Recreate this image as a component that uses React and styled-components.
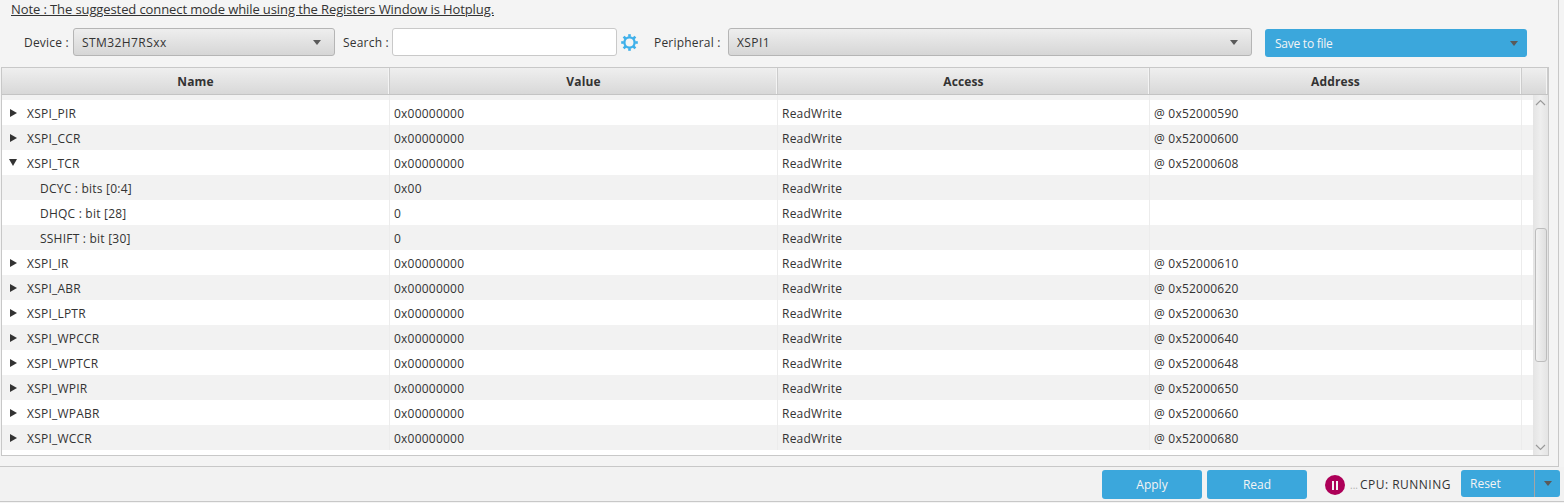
import styled, {createGlobalStyle} from 'styled-components'

const GlobalStyle = createGlobalStyle`
  html, body {
    margin: 0;
    padding: 0;
    background: #f4f4f4;
    overflow: hidden;
  }
  body {
    font-family: "Open Sans", "Liberation Sans", sans-serif;
    font-size: 12px;
    color: #333;
  }
`
const Page = styled.div`
  width: 1564px;
  height: 503px;
  box-sizing: border-box;
  display: flex;
  flex-direction: column;
`
const Main = styled.div`
  width: 1559px;
  height: 467px;
  box-sizing: border-box;
  border-right: 1px solid #c8c8c8;
  border-bottom: 1px solid #c8c8c8;
  display: flex;
  flex-direction: column;
  flex: none;
`
const Note = styled.div`
  height: 28px;
  flex: none;
  padding: 1px 0 0 11px;
  box-sizing: border-box;
  font-size: 13px;
  line-height: 16px;
  text-decoration: underline;
  letter-spacing: -0.1px;
`
const Toolbar = styled.div`
  height: 39px;
  flex: none;
  display: flex;
  align-items: flex-start;
`
const Label = styled.span`
  margin-left: ${p => p.$left}px;
  width: ${p => p.$width}px;
  flex: none;
  line-height: 30px;
  white-space: nowrap;
  letter-spacing: 0.2px;
`
const Select = styled.div`
  width: ${p => p.$width}px;
  height: 28px;
  flex: none;
  box-sizing: border-box;
  display: flex;
  align-items: center;
  justify-content: space-between;
  padding: 1px 13px 0 8px;
  border: 1px solid #b5b5b5;
  border-radius: 3px;
  background: linear-gradient(#eeeeee, #d6d6d6);
  letter-spacing: 0.42px;
`
const Arrow = styled.i`
  width: 0;
  height: 0;
  border-left: 4.5px solid transparent;
  border-right: 4.5px solid transparent;
  border-top: 5px solid #5a5a5a;
`
const SearchInput = styled.input`
  width: 225px;
  height: 28px;
  flex: none;
  box-sizing: border-box;
  border: 1px solid #c9c9c9;
  border-radius: 3px;
  background: #fff;
  outline: none;
`
const GearBox = styled.span`
  width: 24px;
  height: 28px;
  flex: none;
  display: flex;
  align-items: center;
  justify-content: center;
`
const SaveButton = styled.div`
  width: 262px;
  height: 28px;
  margin: 1px 0 0 13px;
  flex: none;
  box-sizing: border-box;
  display: flex;
  align-items: center;
  justify-content: space-between;
  padding: 0 9px 0 10px;
  border-radius: 3px;
  background: #3ba7dc;
  color: #f4f4f4;
  letter-spacing: -0.25px;
`
const Table = styled.div`
  width: 1548px;
  height: 389px;
  margin-left: 1px;
  flex: none;
  box-sizing: border-box;
  border: 1px solid #c8c8c8;
  display: flex;
  flex-direction: column;
  background: #fff;
`
const Head = styled.div`
  height: 27px;
  flex: none;
  box-sizing: border-box;
  display: flex;
  border-bottom: 1px solid #c4c4c4;
`
const HeadCell = styled.div`
  width: ${p => p.$width}px;
  flex: none;
  box-sizing: border-box;
  text-align: center;
  line-height: 27px;
  font-weight: 700;
  letter-spacing: 0.12px;
  color: #333;
  border-right: 1px solid #cccccc;
  box-shadow: inset -1px 0 #f4f4f4;
  background: linear-gradient(#efefef, #d8d8d8);
`
const Body = styled.div`
  flex: 1;
  min-height: 0;
  display: flex;
`
const Rows = styled.div`
  flex: 1;
  min-width: 0;
  overflow: hidden;
`
const Row = styled.div`
  height: 25px;
  margin-top: ${p => p.$clip || 0}px;
  display: flex;
  background: ${p => (p.$alt ? '#f2f2f2' : '#fff')};
`
const Cell = styled.div`
  width: ${p => p.$width}px;
  flex: none;
  box-sizing: border-box;
  padding-left: 4px;
  line-height: 28px;
  white-space: nowrap;
  letter-spacing: 0.22px;
  border-right: 1px solid #ececec;
`
const NameCell = styled(Cell)`
  display: flex;
  padding-left: ${p => (p.$child ? 38 : 8)}px;
`
const Toggle = styled.span`
  width: 17px;
  height: 26px;
  flex: none;
  display: flex;
  align-items: center;
`
const ClosedArrow = styled.i`
  width: 0;
  height: 0;
  margin-top: -1px;
  border-top: 4.5px solid transparent;
  border-bottom: 4.5px solid transparent;
  border-left: 7px solid #333;
`
const OpenArrow = styled.i`
  width: 0;
  height: 0;
  margin: -2px 0 0 -1px;
  border-left: 4.5px solid transparent;
  border-right: 4.5px solid transparent;
  border-top: 7px solid #333;
`
const Scrollbar = styled.div`
  width: 15px;
  flex: none;
  display: flex;
  flex-direction: column;
  background: linear-gradient(90deg, #e4e4e4, #eeeeee 50%, #e4e4e4);
  box-sizing: border-box;
`
const ScrollButton = styled.div`
  height: 15px;
  flex: none;
  display: flex;
  align-items: center;
  justify-content: center;
`
const ScrollTrack = styled.div`
  flex: 1;
  padding-top: 118px;
`
const Thumb = styled.div`
  height: 134px;
  box-sizing: border-box;
  margin: 0 1px 0 2px;
  border: 1px solid #bdbdbd;
  border-radius: 3px;
  background: linear-gradient(90deg, #f2f2f2, #dfdfdf);
`
const Footer = styled.div`
  height: 35px;
  width: 1564px;
  flex: none;
  box-sizing: border-box;
  border-bottom: 1px solid #c8c8c8;
  background: #f2f2f2;
  display: flex;
  align-items: flex-start;
  padding: 3px 0 0 1102px;
`
const ActionButton = styled.div`
  width: 100px;
  height: 29px;
  margin-right: 5px;
  flex: none;
  border-radius: 3px;
  background: #3ba7dc;
  color: #f4f4f4;
  text-align: center;
  line-height: 30px;
`
const PauseBadge = styled.span`
  width: 20px;
  height: 20px;
  margin: 5px 0 0 13px;
  flex: none;
  border-radius: 50%;
  background: #ad0058;
  display: flex;
  align-items: center;
  justify-content: center;
  gap: 2px;
`
const PauseBar = styled.i`
  width: 2px;
  height: 9px;
  background: #f4f4f4;
`
const Dots = styled.span`
  width: 10px;
  margin-left: 5px;
  flex: none;
  line-height: 30px;
  color: #b0b0b0;
  font-size: 10px;
`
const Status = styled.span`
  width: 101px;
  flex: none;
  line-height: 30px;
  white-space: nowrap;
  letter-spacing: 0.48px;
`
const ResetButton = styled.div`
  width: 99px;
  height: 27px;
  flex: none;
  display: flex;
  border-radius: 3px;
  background: #3ba7dc;
  color: #f4f4f4;
  line-height: 28px;
`
const ResetLabel = styled.span`
  width: 64px;
  padding-left: 9px;
  border-right: 1px solid #a5a5a5;
`
const ResetArrow = styled.span`
  flex: 1;
  display: flex;
  align-items: center;
  justify-content: center;
`

const widths = [388, 388, 372, 372, 26]
const headers = ['Name', 'Value', 'Access', 'Address', '']

const rows = [
  {name: 'XSPI_PIR', value: '0x00000000', address: '@ 0x52000590'},
  {name: 'XSPI_CCR', value: '0x00000000', address: '@ 0x52000600'},
  {name: 'XSPI_TCR', value: '0x00000000', address: '@ 0x52000608', open: true},
  {name: 'DCYC : bits [0:4]', value: '0x00', child: true},
  {name: 'DHQC : bit [28]', value: '0', child: true},
  {name: 'SSHIFT : bit [30]', value: '0', child: true},
  {name: 'XSPI_IR', value: '0x00000000', address: '@ 0x52000610'},
  {name: 'XSPI_ABR', value: '0x00000000', address: '@ 0x52000620'},
  {name: 'XSPI_LPTR', value: '0x00000000', address: '@ 0x52000630'},
  {name: 'XSPI_WPCCR', value: '0x00000000', address: '@ 0x52000640'},
  {name: 'XSPI_WPTCR', value: '0x00000000', address: '@ 0x52000648'},
  {name: 'XSPI_WPIR', value: '0x00000000', address: '@ 0x52000650'},
  {name: 'XSPI_WPABR', value: '0x00000000', address: '@ 0x52000660'},
  {name: 'XSPI_WCCR', value: '0x00000000', address: '@ 0x52000680'}
]

const Gear = () => (
  <svg width="17" height="17" viewBox="0 0 17 17">
    <circle cx="8.5" cy="8.5" r="5.1" fill="none" stroke="#3fb0ea" strokeWidth="2.3"/>
    {[0, 45, 90, 135, 180, 225, 270, 315].map(angle => (
      <rect key={angle} x="7.2" y="0.2" width="2.6" height="2.6" fill="#3fb0ea" transform={`rotate(${angle} 8.5 8.5)`}/>
    ))}
  </svg>
)

const Chevron = ({up}) => (
  <svg width="11" height="7" viewBox="0 0 11 7">
    <path d={up ? 'M1 6L5.5 1.5L10 6' : 'M1 1L5.5 5.5L10 1'} fill="none" stroke="#9a9a9a" strokeWidth="1.2"/>
  </svg>
)

const RegisterRow = ({row, alt, clip}) => (
  <Row $alt={alt} $clip={clip}>
    <NameCell $width={widths[0]} $child={row.child}>
      {!row.child && <Toggle>{row.open ? <OpenArrow/> : <ClosedArrow/>}</Toggle>}
      {row.name}
    </NameCell>
    <Cell $width={widths[1]}>{row.value}</Cell>
    <Cell $width={widths[2]}>ReadWrite</Cell>
    <Cell $width={widths[3]}>{row.address}</Cell>
  </Row>
)

export default function App() {
  return (
    <Page>
      <GlobalStyle/>
      <Main>
        <Note>Note : The suggested connect mode while using the Registers Window is Hotplug.</Note>
        <Toolbar>
          <Label $left={24} $width={49}>Device :</Label>
          <Select $width={262}>
            STM32H7RSxx
            <Arrow/>
          </Select>
          <Label $left={8} $width={49}>Search :</Label>
          <SearchInput/>
          <GearBox><Gear/></GearBox>
          <Label $left={13} $width={74}>Peripheral :</Label>
          <Select $width={524}>
            XSPI1
            <Arrow/>
          </Select>
          <SaveButton>
            Save to file
            <Arrow/>
          </SaveButton>
        </Toolbar>
        <Table>
          <Head>
            {headers.map((h, i) => <HeadCell key={i} $width={widths[i]}>{h}</HeadCell>)}
          </Head>
          <Body>
            <Rows>
              <RegisterRow row={{name: 'XSPI_FCR', value: '', address: ''}} alt clip={-20}/>
              {rows.map((row, i) => <RegisterRow key={row.name} row={row} alt={i % 2 === 1}/>)}
            </Rows>
            <Scrollbar>
              <ScrollButton><Chevron up/></ScrollButton>
              <ScrollTrack><Thumb/></ScrollTrack>
              <ScrollButton><Chevron/></ScrollButton>
            </Scrollbar>
          </Body>
        </Table>
      </Main>
      <Footer>
        <ActionButton>Apply</ActionButton>
        <ActionButton>Read</ActionButton>
        <PauseBadge><PauseBar/><PauseBar/></PauseBadge>
        <Dots>...</Dots>
        <Status>CPU: RUNNING</Status>
        <ResetButton>
          <ResetLabel>Reset</ResetLabel>
          <ResetArrow><Arrow/></ResetArrow>
        </ResetButton>
      </Footer>
    </Page>
  )
}
